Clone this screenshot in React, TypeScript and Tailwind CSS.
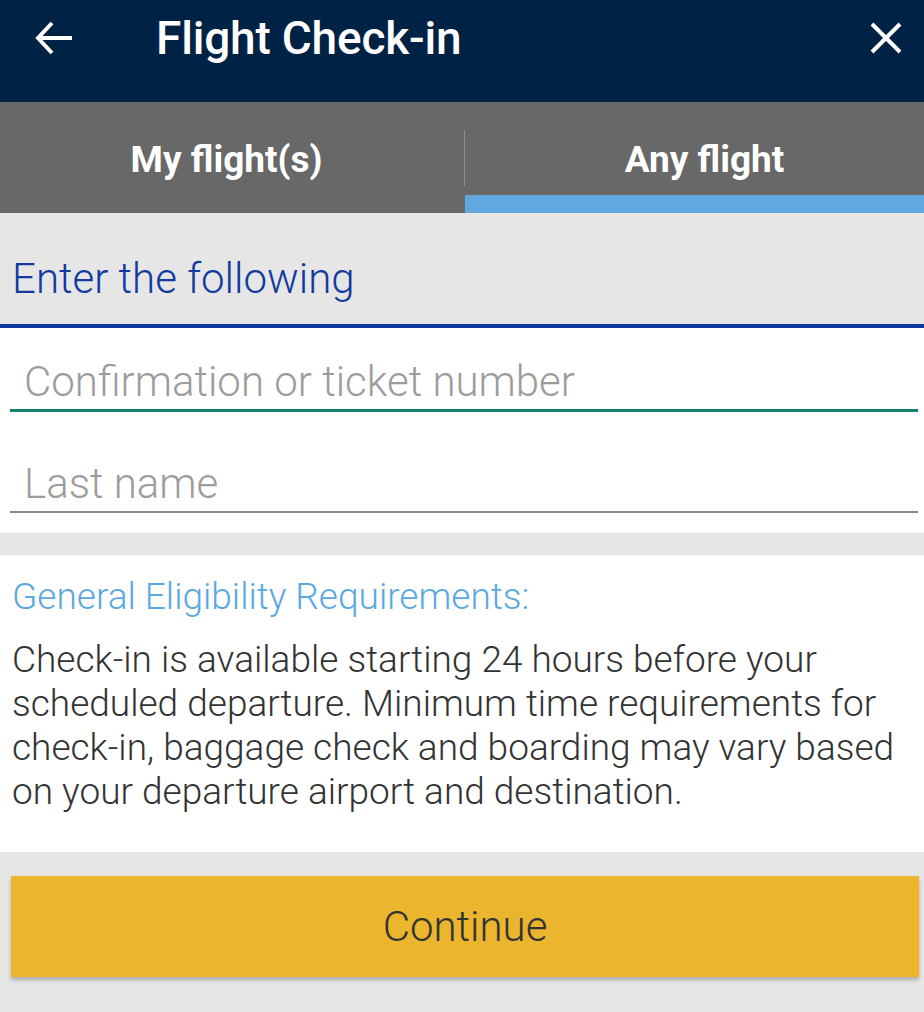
import { useState } from "react";

// Flight check-in screen: header, tab switcher, lookup form, eligibility notes and continue button
export default function App() {
  const [tab, setTab] = useState(1);
  const [confirmation, setConfirmation] = useState("");
  const [lastName, setLastName] = useState("");

  return (
    <div className="w-[924px] h-[1012px] bg-[#e6e6e6] font-['Roboto',sans-serif] flex flex-col overflow-hidden">
      {/*header*/}
      <div className="h-[102px] bg-[#002244] flex items-start pt-[18px] pl-[34px] pr-[18px] shrink-0">
        <button className="w-[40px] h-[40px] flex items-center justify-center">
          <svg width="40" height="40" viewBox="0 0 40 40" fill="none" stroke="white" strokeWidth="4" strokeLinecap="square">
            <path d="M5 20 H36" />
            <path d="M18 5 L4 20 L18 35" strokeLinecap="butt" />
          </svg>
        </button>
        <h1 className="ml-[82px] -mt-[4px] text-white text-[46px] font-medium leading-[48px] tracking-[-0.2px]">Flight Check-in</h1>
        <button className="ml-auto w-[40px] h-[40px] flex items-center justify-center">
          <svg width="32" height="32" viewBox="0 0 32 32" stroke="white" strokeWidth="4">
            <path d="M2 2 L30 30 M30 2 L2 30" />
          </svg>
        </button>
      </div>

      {/*tabs*/}
      <div className="h-[111px] bg-[#686868] flex shrink-0">
        <button
          onClick={() => setTab(0)}
          className="relative w-[465px] flex items-center justify-center text-white text-[37px] font-bold pt-[4px] pr-[12px]"
        >
          My flight(s)
          <span className="absolute right-0 top-[28px] h-[56px] w-px bg-[#8c8c8c]" />
          {tab === 0 && <span className="absolute left-0 right-0 bottom-0 h-[18px] bg-[#62a8e0]" />}
        </button>
        <button
          onClick={() => setTab(1)}
          className="relative flex-1 flex items-center justify-center text-white text-[37px] font-bold pt-[4px] pl-[20px]"
        >
          Any flight
          {tab === 1 && <span className="absolute left-0 right-0 bottom-0 h-[18px] bg-[#62a8e0]" />}
        </button>
      </div>

      {/*form heading*/}
      <div className="h-[115px] flex items-center pl-[12px] pt-[20px] border-b-[4px] border-[#0c3a9e] shrink-0">
        <span className="text-[#123aa0] text-[42px] font-light">Enter the following</span>
      </div>

      {/*inputs*/}
      <div className="bg-white pl-[10px] pr-[6px] pt-[26px] pb-[20px] flex flex-col gap-[43px] shrink-0">
        <input
          value={confirmation}
          onChange={(e) => setConfirmation(e.target.value)}
          placeholder="Confirmation or ticket number"
          className="h-[58px] px-[14px] text-[42px] font-light text-[#333] placeholder:text-[#9c9c9c] outline-none border-b-[3px] border-[#138070] bg-transparent"
        />
        <input
          value={lastName}
          onChange={(e) => setLastName(e.target.value)}
          placeholder="Last name"
          className="h-[58px] px-[14px] text-[42px] font-light text-[#333] placeholder:text-[#9c9c9c] outline-none border-b-[2px] border-[#8a8a8a] bg-transparent"
        />
      </div>

      {/*eligibility notes*/}
      <div className="mt-[22px] bg-white px-[12px] pt-[18px] pb-[38px] shrink-0">
        <h2 className="text-[#5aa8e0] text-[37px] font-light leading-[48px]">General Eligibility Requirements:</h2>
        <p className="mt-[17px] text-[#333] text-[37px] font-light leading-[44px]">
          Check-in is available starting 24 hours before your scheduled departure. Minimum time requirements for check-in, baggage check and boarding may vary based on your departure airport and destination.
        </p>
      </div>

      {/*continue*/}
      <div className="pl-[11px] pr-[5px] pt-[24px] shrink-0">
        <button className="w-full h-[101px] bg-[#ecb52e] text-[#333] text-[42px] font-light shadow-[0_3px_4px_rgba(0,0,0,0.25)]">
          Continue
        </button>
      </div>
    </div>
  );
}
